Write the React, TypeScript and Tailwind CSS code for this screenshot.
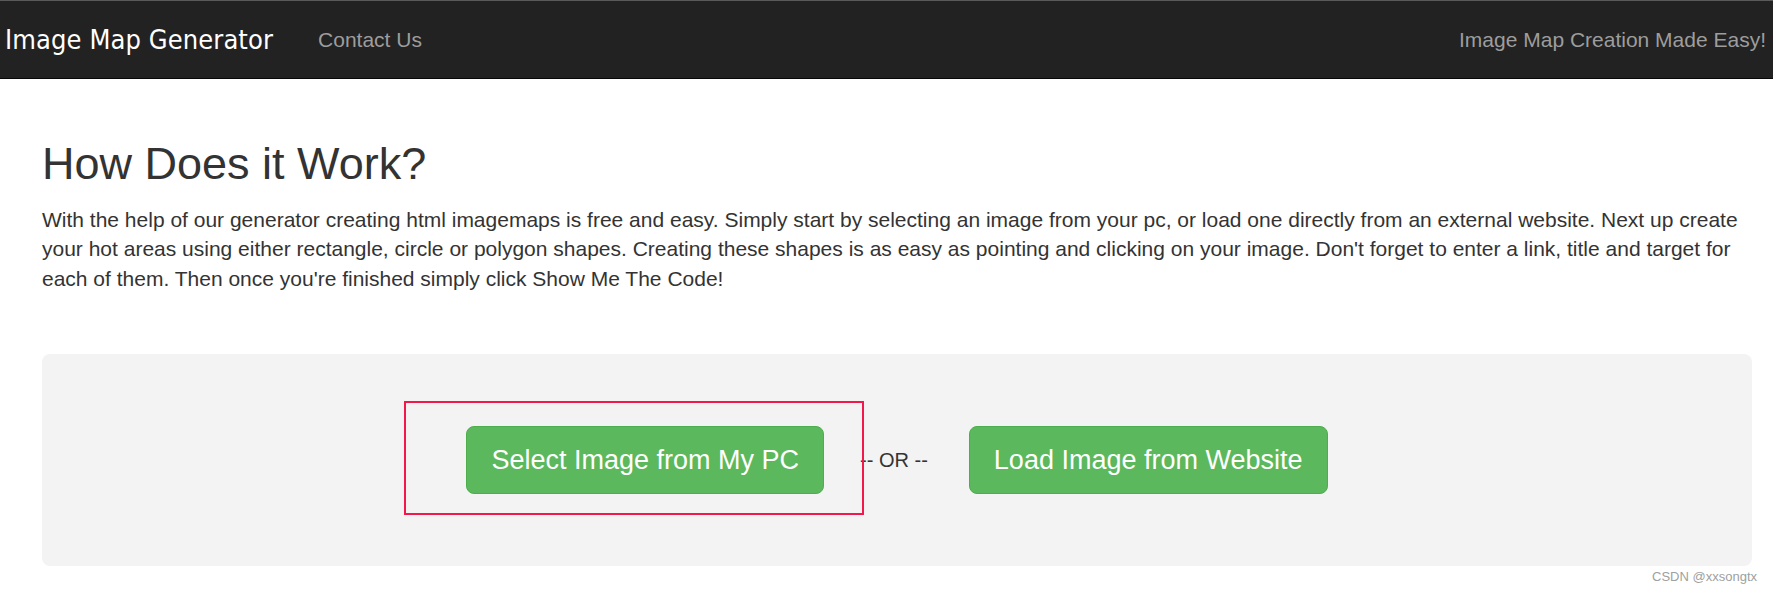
import React from 'react';

const sans = { fontFamily: '"Liberation Sans", Arial, sans-serif' };

function NavBar() {
	return (
		<nav className="h-[79px] bg-[#222222] border-t border-t-[#5a5a5a] border-b border-b-[#080808] flex items-center justify-between pl-[5px] pr-[7px]">
			<div className="flex items-center">
				<a
					href="#"
					className="text-white text-[27px] leading-none tracking-[0.1px] font-['DejaVu_Sans_Condensed','DejaVu_Sans',sans-serif] [font-stretch:condensed]">
					Image Map Generator
				</a>
				<a href="#" className="ml-[45px] text-[21px] text-[#9d9d9d] leading-none">
					Contact Us
				</a>
			</div>
			<p className="text-[21px] text-[#9d9d9d] leading-none">
				Image Map Creation Made Easy!
			</p>
		</nav>
	);
}

function GreenButton(props: { label: string }) {
	return (
		<button className="h-[68px] px-[24px] rounded-lg bg-[#5cb85c] border border-[#4cae4c] text-white text-[27px] leading-none whitespace-nowrap">
			{props.label}
		</button>
	);
}

export default function App() {
	return (
		<div className="min-h-screen bg-white text-[#333333]" style={sans}>
			<NavBar />
			<main className="pl-[42px] pr-[21px]">
				<h1 className="mt-[60px] text-[45px] leading-[1.1] font-normal">
					How Does it Work?
				</h1>
				<p className="mt-[16px] text-[21px] leading-[29.5px]">
					With the help of our generator creating html imagemaps is free and
					easy. Simply start by selecting an image from your pc, or load one
					directly from an external website. Next up create your hot areas
					using either rectangle, circle or polygon shapes. Creating these
					shapes is as easy as pointing and clicking on your image. Don't forget
					to enter a link, title and target for each of them. Then once you're
					finished simply click Show Me The Code!
				</p>
				<section className="mt-[61px] h-[212px] rounded-lg bg-[#f3f3f3] flex items-center justify-center">
					<div className="relative">
						<GreenButton label="Select Image from My PC" />
						<div className="absolute -left-[62px] -top-[25px] -right-[40px] -bottom-[21px] border-2 border-[#f2184c] pointer-events-none" />
					</div>
					<span className="ml-[36px] mr-[41px] text-[20px] leading-none">
						-- OR --
					</span>
					<GreenButton label="Load Image from Website" />
				</section>
			</main>
			<div className="flex justify-end pr-[16px] mt-[3px]">
				<span className="text-[13px] leading-4 text-[#a0a0a0]">
					CSDN @xxsongtx
				</span>
			</div>
		</div>
	);
}
